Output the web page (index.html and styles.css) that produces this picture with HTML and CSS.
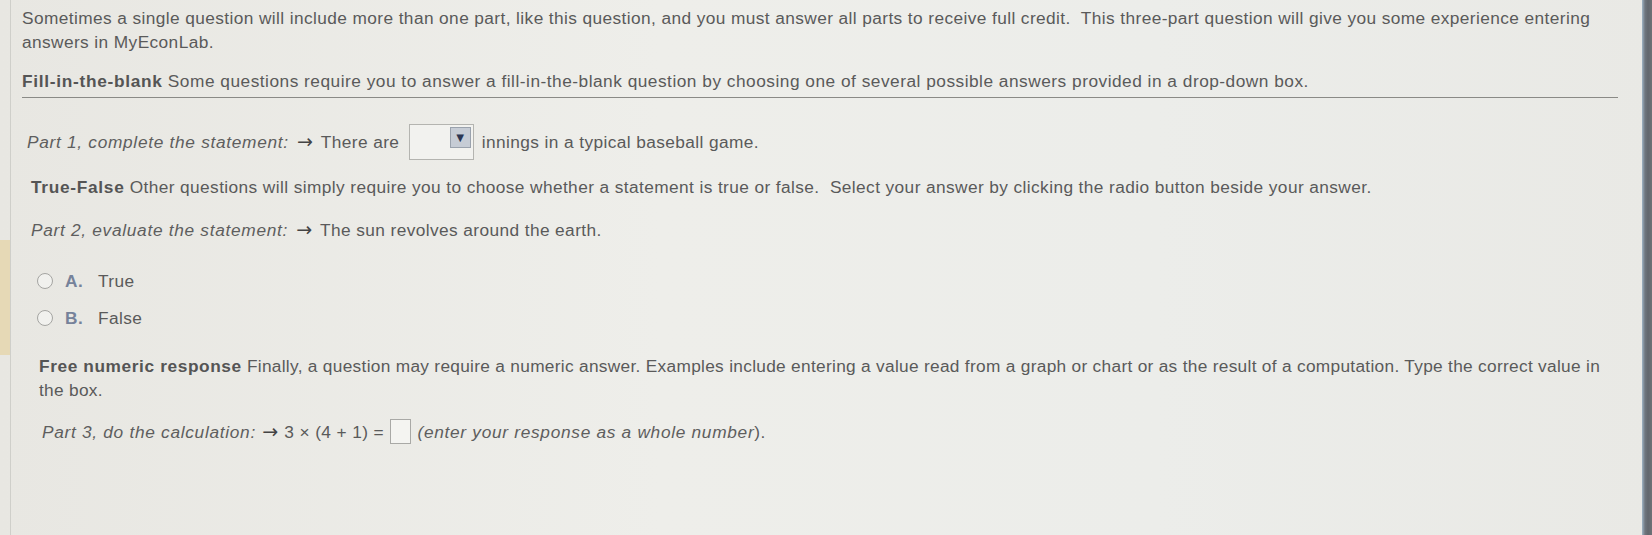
FILE: index.html
```
<!DOCTYPE html>
<html>
<head>
<meta charset="utf-8">
<title>MyEconLab question</title>
<link rel="stylesheet" href="styles.css">
</head>
<body>
<div class="screen">
	<div class="question">
		<p class="intro">Sometimes a single question will include more than one part, like this question, and you must answer all parts to receive full credit.&nbsp; This three-part question will give you some experience entering answers in MyEconLab.</p>
		<p class="head fill"><b>Fill-in-the-blank</b> Some questions require you to answer a fill-in-the-blank question by choosing one of several possible answers provided in a drop-down box.</p>
		<hr class="rule">
		<div class="part part1"><i>Part 1, complete the statement:</i> <span class="arr">&rarr;</span> There are <span class="select"><span class="select-btn">&#9660;</span></span> innings in a typical baseball game.</div>
		<p class="head tf"><b>True-False</b> Other questions will simply require you to choose whether a statement is true or false.&nbsp; Select your answer by clicking the radio button beside your answer.</p>
		<div class="part part2"><i>Part 2, evaluate the statement:</i> <span class="arr">&rarr;</span> The sun revolves around the earth.</div>
		<ul class="choices">
			<li><span class="radio"></span><span class="letter">A.</span>True</li>
			<li><span class="radio"></span><span class="letter">B.</span>False</li>
		</ul>
		<p class="head free"><b>Free numeric response</b> Finally, a question may require a numeric answer. Examples include entering a value read from a graph or chart or as the result of a computation. Type the correct value in the box.</p>
		<div class="part part3"><i>Part 3, do the calculation:</i> <span class="arr">&rarr;</span> 3 &times; (4 + 1) = <span class="numbox"></span> <i>(enter your response as a whole number</i>).</div>
	</div>
	<div class="edge"></div>
</div>
</body>
</html>
```
FILE: styles.css
```
html,body{margin:0;padding:0;}
body{background:#e9e9e4;font:17.3px/24px "Liberation Sans",Arial,sans-serif;letter-spacing:0.4px;color:#5a5a5a;}
.screen{display:flex;height:535px;overflow:hidden;background:linear-gradient(90deg,#e8e7e2 0,#eeeeea 40%,#ecedea 70%,#e9e9e5 100%);}
.question{flex:1;padding:6px 9px 0 11px;border-left:1px solid #cfcfca;margin-left:10px;position:relative;}
.question:before{content:"";position:absolute;left:-11px;top:240px;width:10px;height:115px;background:#e6d9b6;}
.edge{width:27px;margin-left:4px;background:linear-gradient(90deg,#9fb4c4 0,#6f767e 3px,#62676d 60%,#6d7177 100%);}
p{margin:0;}
b{color:#555;letter-spacing:0.7px;}
.intro{width:1592px;}
.head{margin-top:15px;}
.fill{letter-spacing:0.5px;}
.rule{margin:4px 0 0;border:0;border-top:1px solid #8a8a86;width:1596px;}
.part i{color:#5e5e5e;letter-spacing:0.7px;}
.arr{font-family:"DejaVu Sans",sans-serif;font-size:19px;line-height:1;color:#444;letter-spacing:0;margin:0 3px;}
.part1{margin-top:26px;line-height:36px;height:36px;padding-left:5px;}
.select{display:inline-block;vertical-align:top;box-sizing:border-box;width:65px;height:36px;margin:0 3px 0 4px;border:1px solid #b4b4b0;background:#f2f2ef;position:relative;}
.select-btn{position:absolute;right:2px;top:2px;width:21px;height:21px;box-sizing:border-box;border:1px solid #9aa2ad;background:#c6ccd5;color:#2b3652;font-size:13px;line-height:19px;text-align:center;letter-spacing:0;}
.tf{margin-top:15px;padding-left:9px;}
.part2{margin-top:19px;padding-left:9px;}
.choices{list-style:none;margin:27px 0 0;padding:0 0 0 15px;}
.choices li{display:flex;align-items:center;height:24px;margin-bottom:13px;}
.radio{display:inline-block;box-sizing:border-box;width:16px;height:16px;border:1px solid #a5a5a2;border-radius:50%;background:#f1f1ee;margin-right:12px;}
.letter{font-weight:bold;color:#76829a;width:33px;letter-spacing:0.4px;}
.free{margin-top:24px;padding-left:17px;width:1590px;letter-spacing:0.3px;}
.free b{letter-spacing:0.6px;}
.part3{margin-top:17px;line-height:26px;height:26px;padding-left:20px;}
.part3 .arr{margin:0 1px;}
.numbox{display:inline-block;vertical-align:top;box-sizing:border-box;width:21px;height:25px;margin:0 1px;border:1px solid #a9a9a6;background:#f4f4f1;}
```
